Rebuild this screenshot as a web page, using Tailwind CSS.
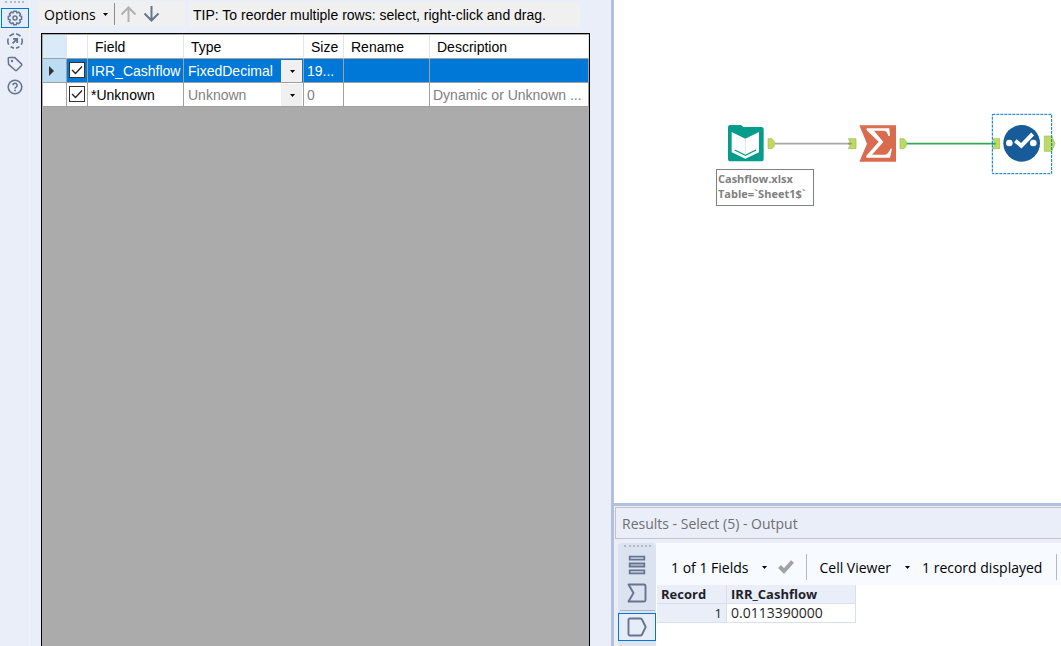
<!DOCTYPE html>
<html lang="en">
<head>
    <meta charset="UTF-8">
    <meta name="viewport" content="width=device-width, initial-scale=1.0">
    <title>Workflow - Select</title>
    <script src="https://cdn.jsdelivr.net/npm/@tailwindcss/browser@4"></script>
</head>
<body class="grid h-screen grid-cols-[611fr_450fr] overflow-hidden bg-[#e9eef9] text-black">

    <!-- Configuration pane -->
    <section class="flex min-w-0 font-['Liberation_Sans',sans-serif] text-[14px]">

        <!-- Tool rail -->
        <nav class="flex w-[30px] shrink-0 flex-col items-center border-r border-[#f3f4f8] text-[#66758f]">
            <div class="mt-px w-[19px] border-t-2 border-dotted border-[#b4b8c2]"></div>
            <button class="mt-[5px] flex h-5 w-7 items-center justify-center border border-[#0078d7] bg-[#e3ecf9]" aria-label="Configuration">
                <svg class="size-4" viewBox="0 0 16 16" fill="none" stroke="currentColor" stroke-width="1.5" stroke-linejoin="round">
                    <path d="M6.6 1.2h2.8l.5 1.7 1.6-.8 2 2-.9 1.6 2 .7v2.9l-2 .7.9 1.7-2 2-1.6-.9-.6 2H6.6L6 12.8l-1.6.9-2-2 .9-1.7-2-.7V6.4l2-.7-.9-1.6 2-2 1.6.8z"/>
                    <circle cx="8" cy="8" r="2"/>
                </svg>
            </button>
            <button class="mt-[3px] flex h-5 w-7 items-center justify-center" aria-label="Navigation">
                <svg class="size-4" viewBox="0 0 16 16" fill="none" stroke="currentColor" stroke-width="1.6">
                    <path d="M7 .9A7.2 7.2 0 0 0 2.600 3.300M1.300 5.500A7.200 7.200 0 0 0 1.800 11.700M3.600 13.700a7.200 7.200 0 0 0 3.400 1.400M9.200.9a7.200 7.200 0 0 1 4.300 2.400M14.700 5.500a7.200 7.200 0 0 1-.5 6.200M12.400 13.700a7.200 7.200 0 0 1-3.300 1.400"/>
                    <path d="M5.600 10.400l4.200-4.200M6 5.900h4.200v4.200" stroke-width="1.8"/>
                </svg>
            </button>
            <button class="mt-[3px] flex h-5 w-7 items-center justify-center" aria-label="Annotation">
                <svg class="size-4" viewBox="0 0 16 16" fill="none" stroke="currentColor" stroke-width="1.5" stroke-linejoin="round">
                    <path d="M1.2 2.500q0-1.100 1.100-1.100h5.200l6.900 6.500q.8.800 0 1.600l-4.600 4.700q-.8.700-1.600 0L1.600 8.400z"/>
                    <circle cx="5" cy="5" r="1.2" fill="currentColor" stroke="none"/>
                </svg>
            </button>
            <button class="mt-[3px] flex h-5 w-7 items-center justify-center" aria-label="Help">
                <svg class="size-4" viewBox="0 0 16 16" fill="none" stroke="currentColor" stroke-width="1.6">
                    <circle cx="8" cy="8" r="6.8"/>
                    <path d="M5.900 6.300a2.100 2.100 0 1 1 3.200 1.800Q8 8.700 8 9.700"/>
                    <path d="M8 10.700v1.500" stroke-width="1.8"/>
                </svg>
            </button>
        </nav>

        <div class="mr-[21px] ml-[11px] flex min-w-0 flex-1 flex-col">
            <div class="-ml-[3px] flex h-[33px] items-start gap-1 pt-px">
                <div class="flex h-[25px] w-[147px] shrink-0 items-center bg-[#f0f0f0] pl-[6px]">
                    <button class="flex items-center gap-[7px] pt-px font-['Open_Sans',sans-serif] text-[14px]">
                        Options
                        <svg class="h-[3px] w-[5px]" viewBox="0 0 5 3"><path d="M0 0h5L2.500 3z"/></svg>
                    </button>
                    <div class="ml-[6px] h-[22px] w-px bg-[#8c8c8c]"></div>
                    <button class="ml-[5px]" aria-label="Move up">
                        <svg class="h-4 w-[17px]" viewBox="0 0 17 16" fill="none" stroke="#b1b1b1" stroke-width="2"><path d="M8.500 16V2M1.500 8.500l7-7 7 7"/></svg>
                    </button>
                    <button class="ml-[6px]" aria-label="Move down">
                        <svg class="h-4 w-[17px]" viewBox="0 0 17 16" fill="none" stroke="#66758f" stroke-width="2"><path d="M8.500 0v14M1.500 7.500l7 7 7-7"/></svg>
                    </button>
                </div>
                <p class="mt-px mr-[10px] h-[25px] flex-1 truncate bg-[#f0f0f0] pl-1 leading-[26px]">TIP: To reorder multiple rows: select, right-click and drag.</p>
            </div>

            <!-- Field grid -->
            <div class="flex-1 border border-b-0 border-black bg-[#ababab] pt-px pl-px">
                <table class="w-full table-fixed border-separate border-spacing-0 bg-white text-left">
                    <colgroup>
                        <col class="w-6"><col class="w-[21px]"><col class="w-24"><col class="w-[120px]"><col class="w-10"><col class="w-[86px]"><col>
                    </colgroup>
                    <thead>
                        <tr class="h-6 *:border-r *:border-b *:border-r-[#e5e5e5] *:border-b-[#a0a0a0] *:px-0 *:pt-[2px] *:pb-0 *:font-normal">
                            <th class="bg-[#d9ebf9]"></th>
                            <th></th>
                            <th><span class="pl-[7px]">Field</span></th>
                            <th><span class="pl-[7px]">Type</span></th>
                            <th><span class="pl-[7px]">Size</span></th>
                            <th><span class="pl-[7px]">Rename</span></th>
                            <th><span class="pl-[7px]">Description</span></th>
                        </tr>
                    </thead>
                    <tbody>
                        <tr class="h-6 bg-[#0078d7] text-white *:border-r *:border-b *:border-[#a0a0a0] *:p-0">
                            <td class="bg-[#bcdcf4]">
                                <svg class="ml-[6px] h-[10px] w-[5px]" viewBox="0 0 5 10"><path d="M0 0l5 5-5 5z" fill="#333"/></svg>
                            </td>
                            <td class="align-top">
                                <label class="relative mx-auto mt-[3px] block size-4">
                                    <input type="checkbox" checked aria-label="IRR_Cashflow" class="block size-4 appearance-none border border-[#333] bg-white">
                                    <svg class="pointer-events-none absolute inset-0 size-4" viewBox="0 0 16 16" fill="none" stroke="#222" stroke-width="1.3"><path d="M3 8l3.500 3.500 6.500-7"/></svg>
                                </label>
                            </td>
                            <td><div class="overflow-hidden pt-[2px] pl-[3px] whitespace-nowrap">IRR_Cashflow</div></td>
                            <td>
                                <div class="relative pr-px">
                                    <select aria-label="Type of IRR_Cashflow" class="block h-[22px] w-full appearance-none pt-px pl-1"><option>FixedDecimal</option></select>
                                    <span class="pointer-events-none absolute inset-y-0 right-px flex w-[21px] items-center justify-center bg-[#f0f0f0] pt-px pl-px">
                                        <svg class="h-[3px] w-[5px]" viewBox="0 0 5 3"><path d="M0 0h5L2.500 3z"/></svg>
                                    </span>
                                </div>
                            </td>
                            <td><div class="truncate pt-[2px] pl-[3px]">19...</div></td>
                            <td></td>
                            <td></td>
                        </tr>
                        <tr class="h-6 text-[#808080] *:border-r *:border-b *:border-[#a0a0a0] *:p-0">
                            <td></td>
                            <td class="align-top">
                                <label class="relative mx-auto mt-[3px] block size-4">
                                    <input type="checkbox" checked aria-label="Unknown" class="block size-4 appearance-none border border-[#333] bg-white">
                                    <svg class="pointer-events-none absolute inset-0 size-4" viewBox="0 0 16 16" fill="none" stroke="#222" stroke-width="1.3"><path d="M3 8l3.500 3.500 6.500-7"/></svg>
                                </label>
                            </td>
                            <td><div class="truncate pt-[2px] pl-[3px] text-black">*Unknown</div></td>
                            <td>
                                <div class="relative pr-px">
                                    <select aria-label="Type of Unknown" class="block h-[22px] w-full appearance-none pt-px pl-1"><option>Unknown</option></select>
                                    <span class="pointer-events-none absolute inset-y-0 right-px flex w-[21px] items-center justify-center bg-[#f0f0f0] pt-px pl-px">
                                        <svg class="h-[3px] w-[5px]" viewBox="0 0 5 3"><path d="M0 0h5L2.500 3z" fill="#000"/></svg>
                                    </span>
                                </div>
                            </td>
                            <td><div class="pt-[2px] pl-[3px]">0</div></td>
                            <td></td>
                            <td><div class="truncate pt-[2px] pl-[3px]">Dynamic or Unknown ...</div></td>
                        </tr>
                    </tbody>
                </table>
            </div>
        </div>
    </section>

    <div class="flex min-w-0 flex-col border-l-3 border-[#b1c0e0]">

        <!-- Workflow canvas -->
        <main class="relative flex-1 overflow-hidden bg-white">
            <svg class="absolute top-[110px] left-[96px] h-[100px] w-[351px]" viewBox="0 0 1053 300">
                <!-- connections -->
                <path d="M194 101H424" stroke="#a8a8a8" stroke-width="5"/>
                <path d="M588 101H858" stroke="#35a853" stroke-width="5"/>
                <!-- anchors -->
                <g fill="#bddb62" stroke="#9dbd53" stroke-width="2">
                    <path d="M174 86h12q7 5 8 15-1 10-8 15h-12z"/>
                    <path d="M415 86h23v30h-23l7-15z"/>
                    <path d="M570 86h12q7 5 8 15-1 10-8 15h-12z"/>
                    <path d="M848 86h21v30h-21l7-15z"/>
                    <path d="M1003 78h22l10 23-10 23h-22z"/>
                </g>
                <path d="M414 101h11" stroke="#8d9a6a" stroke-width="5"/>
                <path d="M846 101h11" stroke="#35a853" stroke-width="5"/>
                <!-- input data -->
                <path d="M60 45h33l7 6h54q7 0 7 7v88q0 8-8 8H61q-7 0-7-8V52q0-7 6-7z" fill="#069c8b"/>
                <path d="M65 66l41 20 41-20v61l-41 19-41-19z" fill="#fff"/>
                <path d="M74 120l32 16 32-16" fill="none" stroke="#069c8b" stroke-width="4"/>
                <path d="M106 86v49" stroke="#b9dfda" stroke-width="2"/>
                <!-- summarize -->
                <path d="M448 46h110v109H448l23-54z" fill="#d96b4e"/>
                <path d="M470 55h68l2 23h-5q-4-16-15-16h-28l28 34-34 38h36q13 0 19-18h5l-6 27h-71v-6l37-42-36-34z" fill="#fff"/>
                <!-- select -->
                <rect x="847" y="13" width="178" height="178" fill="none" stroke="#0078d7" stroke-width="3" stroke-dasharray="9 3"/>
                <circle cx="935" cy="100" r="55" fill="#175c98"/>
                <circle cx="898" cy="99" r="10" fill="#fff"/>
                <circle cx="970" cy="99" r="10" fill="#fff"/>
                <path d="M916 92l18 15 34-35" fill="none" stroke="#fff" stroke-width="12"/>
            </svg>
            <p class="absolute top-[169px] left-[102px] h-[37px] w-[98px] border border-[#808080] bg-white px-px pt-px font-['Open_Sans',sans-serif] text-[11px] leading-[15px] font-bold whitespace-nowrap text-[#808080]">Cashflow.xlsx<br>Table=`Sheet1$`</p>
        </main>

        <!-- Results pane -->
        <section class="border-t-3 border-[#b1c0e0] pt-px font-['Open_Sans',sans-serif] text-[14px]">
            <h2 class="ml-px flex h-8 items-center border border-r-0 border-[#c3c3c3] pl-[6px] text-[#6f6f6f]">Results - Select (5) - Output</h2>
            <div class="mt-1 flex">
                <nav class="ml-1 flex w-[38px] shrink-0 flex-col items-center rounded-t bg-[#dbe2f0] text-[#66758f]">
                    <div class="mt-[2px] w-[27px] border-t-2 border-dotted border-[#b4b8c2]"></div>
                    <button class="mt-2 flex h-5 w-full items-center justify-center" aria-label="Messages">
                        <svg class="h-5 w-[18px]" viewBox="0 0 18 20" fill="none" stroke="currentColor" stroke-width="1.8"><path d="M1.700 1.700h14.600v3H1.700zM1.700 8.500h14.600v3H1.700zM1.700 15.300h14.600v3H1.700z"/></svg>
                    </button>
                    <button class="mt-2 flex h-5 w-full items-center justify-center" aria-label="Input anchor">
                        <svg class="h-5 w-5" viewBox="0 0 20 20" fill="none" stroke="currentColor" stroke-width="1.9" stroke-linejoin="round"><path d="M1.500 1.500H17q1.500 0 1.500 1.500v14q0 1.500-1.500 1.500H1.500L6.500 10z"/></svg>
                    </button>
                    <div class="mt-[7px] h-px w-[35px] bg-[#b0b4bd]"></div>
                    <button class="mt-[2px] flex h-7 w-full items-center justify-center border border-[#0078d7] bg-[#e6edf9]" aria-label="Output anchor">
                        <svg class="h-5 w-5" viewBox="0 0 20 20" fill="none" stroke="currentColor" stroke-width="1.9" stroke-linejoin="round"><path d="M3 1.500h10.500q1 0 1.500 1l3.700 7.500-3.700 7.500q-.5 1-1.500 1H3q-1.500 0-1.500-1.500V3Q1.500 1.500 3 1.500z"/></svg>
                    </button>
                    <div class="h-[5px]"></div>
                </nav>
                <div class="min-w-0 flex-1 bg-white">
                    <div class="flex h-[42px] items-center bg-[#f7faff] pt-[6px] pl-[15px] whitespace-nowrap">
                        <button class="flex items-center gap-[14px]">1 of 1 Fields
                            <svg class="h-[3px] w-[5px]" viewBox="0 0 5 3"><path d="M0 0h5L2.500 3z"/></svg>
                        </button>
                        <button class="ml-[11px]" aria-label="Apply">
                            <svg class="h-[14px] w-4" viewBox="0 0 16 14" fill="none" stroke="#a3a3a3" stroke-width="4"><path d="M1.500 6.500L6 11l8.500-9.500"/></svg>
                        </button>
                        <div class="ml-3 h-[26px] w-px bg-[#b8b8b8]"></div>
                        <button class="ml-3 flex items-center gap-[14px]">Cell Viewer
                            <svg class="h-[3px] w-[5px]" viewBox="0 0 5 3"><path d="M0 0h5L2.500 3z"/></svg>
                        </button>
                        <span class="ml-3">1 record displayed</span>
                        <div class="ml-[14px] h-[26px] w-px bg-[#b8b8b8]"></div>
                    </div>
                    <table class="ml-px table-fixed border-separate border-spacing-0 text-[#1f1f2a]">
                        <colgroup><col class="w-[70px]"><col class="w-[129px]"></colgroup>
                        <thead>
                            <tr class="h-[18px] text-[13px] *:border-r *:border-b *:border-[#d8e0ef] *:bg-[#e9eef9] *:py-0 *:pr-0 *:pl-1 *:text-left *:leading-[18px]">
                                <th>Record</th>
                                <th>IRR_Cashflow</th>
                            </tr>
                        </thead>
                        <tbody>
                            <tr class="h-[19px] *:border-r *:border-b *:border-[#d8e0ef] *:py-0 *:pr-1 *:pl-1 *:leading-[18px]">
                                <td class="bg-[#e9eef9] text-right text-[13px]">1</td>
                                <td>0.0113390000</td>
                            </tr>
                        </tbody>
                    </table>
                </div>
            </div>
        </section>
    </div>
</body>
</html>
